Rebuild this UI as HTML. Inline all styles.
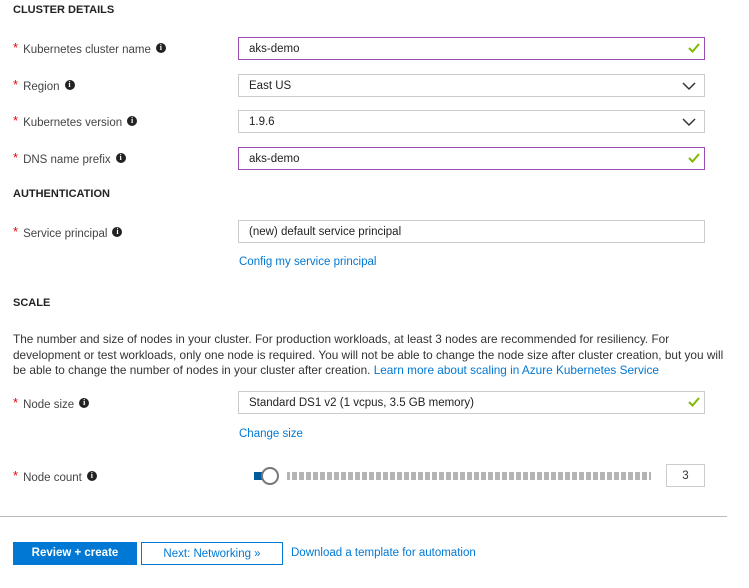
<!DOCTYPE html>
<html><head><meta charset="utf-8"><style>
body{margin:0;width:749px;height:588px;background:#fff;font-family:"Liberation Sans",sans-serif;font-size:11.5px;color:#333;position:relative;overflow:hidden}
.a{position:absolute;white-space:nowrap}
.h{font-weight:bold;font-size:11px;color:#222}
.lbl{color:#444}
.lbl b{color:#e00;font-weight:normal;font-size:13px;margin-right:5px;position:relative;top:-1px}
.i{display:inline-block;width:10px;height:10px;border-radius:50%;background:#222;color:#fff;font-size:8px;line-height:10px;text-align:center;font-weight:bold;margin-left:5px;font-family:"Liberation Serif",serif;vertical-align:middle;position:relative;top:-2px}
.inp{position:absolute;left:238px;width:465px;height:21px;border:1px solid #ccc;box-sizing:content-box;line-height:22px;color:#222}
.inp span{margin-left:10px}
.pur{border-color:#9b4cb5}
.chk{position:absolute;right:3px;top:3px}
.dd{position:absolute;right:8px;top:4px}
.lnk{color:#0078d4}
</style></head><body>
<div class="a h" style="left:13px;top:4px">CLUSTER DETAILS</div>
<div class="a lbl" style="left:13px;top:41px"><b>*</b>Kubernetes cluster name<span class="i">i</span></div>
<div class="inp pur" style="top:37px"><span>aks-demo</span><svg class="chk" width="14" height="14"><path d="M2 7l3.5 3.5L12 3" stroke="#7fba00" stroke-width="2" fill="none"/></svg></div>
<div class="a lbl" style="left:13px;top:78px"><b>*</b>Region<span class="i">i</span></div>
<div class="inp" style="top:74px"><span>East US</span><svg class="dd" width="14" height="14"><path d="M1 4l6 6 6-6" stroke="#333" stroke-width="1.5" fill="none"/></svg></div>
<div class="a lbl" style="left:13px;top:114px"><b>*</b>Kubernetes version<span class="i">i</span></div>
<div class="inp" style="top:110px"><span>1.9.6</span><svg class="dd" width="14" height="14"><path d="M1 4l6 6 6-6" stroke="#333" stroke-width="1.5" fill="none"/></svg></div>
<div class="a lbl" style="left:13px;top:151px"><b>*</b>DNS name prefix<span class="i">i</span></div>
<div class="inp pur" style="top:147px"><span>aks-demo</span><svg class="chk" width="14" height="14"><path d="M2 7l3.5 3.5L12 3" stroke="#7fba00" stroke-width="2" fill="none"/></svg></div>
<div class="a h" style="left:13px;top:188px">AUTHENTICATION</div>
<div class="a lbl" style="left:13px;top:225px"><b>*</b>Service principal<span class="i">i</span></div>
<div class="inp" style="top:220px"><span>(new) default service principal</span></div>
<div class="a lnk" style="left:239px;top:256px">Config my service principal</div>
<div class="a h" style="left:13px;top:297px">SCALE</div>
<div class="a" style="left:13px;top:332px;line-height:15.5px;color:#333;font-size:11.8px">The number and size of nodes in your cluster. For production workloads, at least 3 nodes are recommended for resiliency. For<br>development or test workloads, only one node is required. You will not be able to change the node size after cluster creation, but you will<br>be able to change the number of nodes in your cluster after creation. <span class="lnk">Learn more about scaling in Azure Kubernetes Service</span></div>
<div class="a lbl" style="left:13px;top:396px"><b>*</b>Node size<span class="i">i</span></div>
<div class="inp" style="top:391px"><span>Standard DS1 v2 (1 vcpus, 3.5 GB memory)</span><svg class="chk" width="14" height="14"><path d="M2 7l3.5 3.5L12 3" stroke="#7fba00" stroke-width="2" fill="none"/></svg></div>
<div class="a lnk" style="left:239px;top:428px">Change size</div>
<div class="a lbl" style="left:13px;top:469px"><b>*</b>Node count<span class="i">i</span></div>
<svg class="a" style="left:250px;top:462px" width="410" height="28">
<defs><pattern id="p" width="7" height="8" patternUnits="userSpaceOnUse"><rect width="5" height="8" fill="#b4b4b4"/></pattern></defs>
<rect x="37" y="10" width="364" height="8" fill="url(#p)"/>
<rect x="4" y="10" width="10" height="8" fill="#005a9e"/>
<circle cx="20" cy="14" r="8" fill="#fff" stroke="#777" stroke-width="2"/>
</svg>
<div class="a" style="left:666px;top:464px;width:37px;height:21px;border:1px solid #ccc;text-align:center;line-height:22px">3</div>
<div class="a" style="left:0;top:516px;width:727px;height:1px;background:#bbb"></div>
<div class="a" style="left:13px;top:542px;width:124px;height:23px;background:#0078d4;color:#fff;font-weight:bold;text-align:center;line-height:23px">Review + create</div>
<div class="a" style="left:141px;top:542px;width:140px;height:21px;border:1px solid #0078d4;color:#0078d4;text-align:center;line-height:22px">Next: Networking »</div>
<div class="a lnk" style="left:291px;top:547px">Download a template for automation</div>
</body></html>
